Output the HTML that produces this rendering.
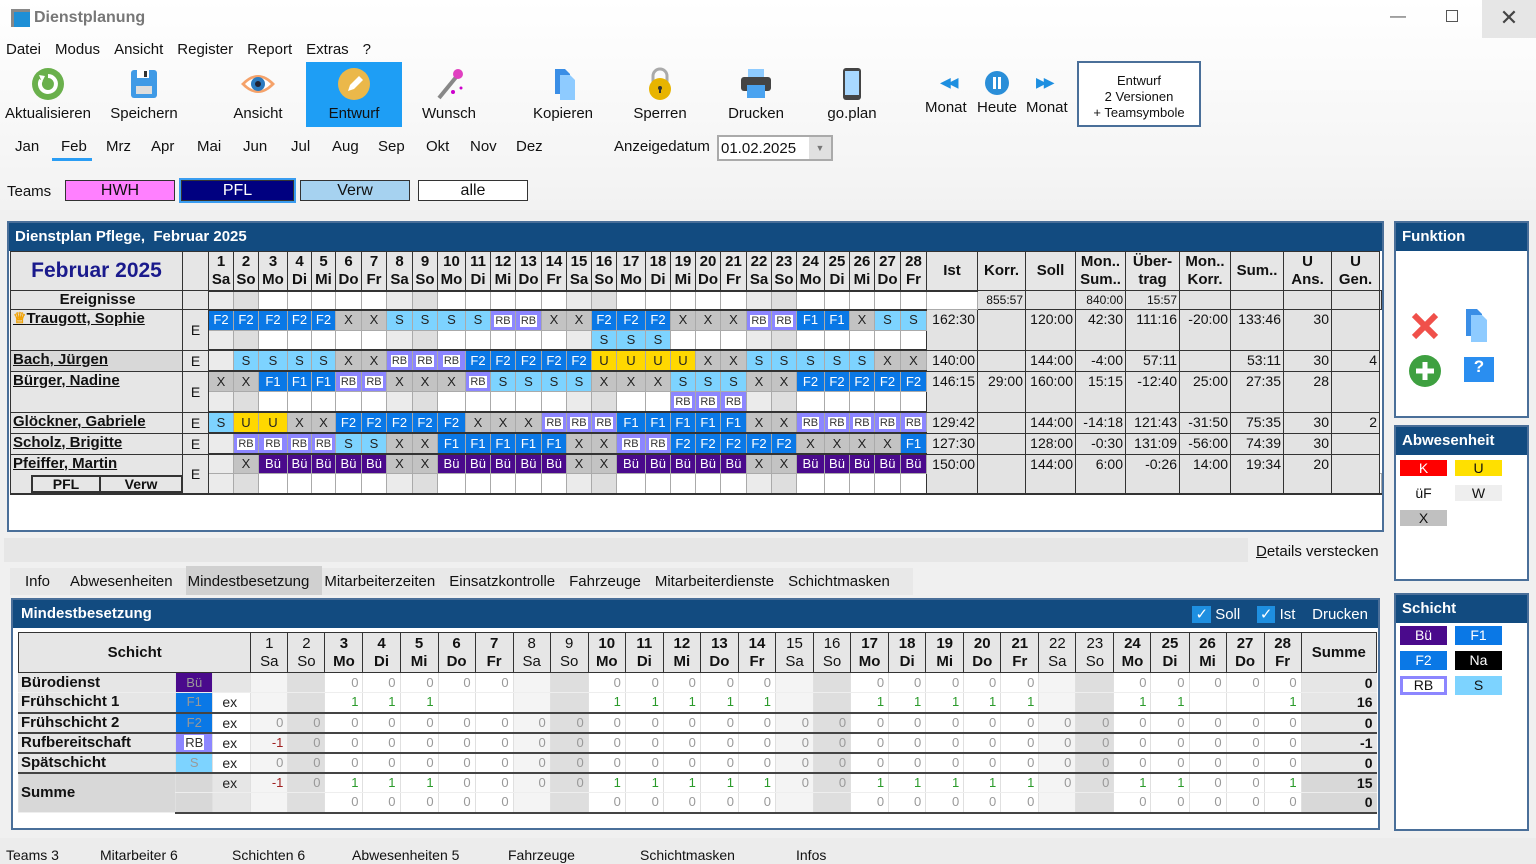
<!DOCTYPE html>
<html><head><meta charset="utf-8"><style>
*{box-sizing:border-box;margin:0;padding:0}
body{width:1536px;height:864px;overflow:hidden;background:#f0f0f0;font-family:"Liberation Sans",Arial,sans-serif;font-size:14px;color:#111;position:relative}
.abs{position:absolute}
.top{left:0;top:0;width:1536px;height:210px;background:linear-gradient(#fff,#f2f2f2)}
.menu span{margin-right:14px}
.tb{position:absolute;top:62px;height:65px;text-align:center;font-size:15px}
.tb svg{display:block;margin:4px auto 0}
.tb .l{position:absolute;left:0;right:0;top:43px}
.mon span{position:absolute;top:138px;font-size:15px}
.team{position:absolute;top:180px;height:21px;border:1px solid #333;text-align:center;font-size:16px;line-height:19px}
.panel{position:absolute;background:#fff;border:2px solid #4a6f99}
.ttl{background:#124b80;color:#fff;font-weight:bold;font-size:15px;padding:5px 6px;height:28px}
table{border-collapse:collapse;table-layout:fixed}
#g td{height:20px;border:1px solid #aaa;text-align:center;font-size:13px;padding:0;white-space:nowrap;overflow:hidden;line-height:18px}
#g tr.hd td{height:39px;font-weight:bold;font-size:15px;line-height:18px;border:1px solid #333;background:#e6e6e6}
#g .sep td{border-top:2px solid #333;height:19px}
#g td.nm{text-align:left;font-weight:bold;font-size:15px;text-decoration:underline;vertical-align:top;background:#e6e6e6;border:1px solid #333;padding-left:2px}
#g td.e{background:#e6e6e6;border:1px solid #333;font-size:14px}
#g td.v{background:#e3e3e3;border:1px solid #333;text-align:right;vertical-align:top;font-size:14px;padding-right:2px}
.f{background:#0a78e6!important;color:#fff}
.s{background:#7dd3ff!important;color:#222}
.x{background:#c3c3c3!important;color:#222}
.r{background:#8c86ff!important}
.r i,.ri{font-style:normal;background:#fff;color:#333;font-size:11px;padding:0 1px}
.b{background:#4a0a8c!important;color:#fff}
.u{background:#ffd800!important;color:#222}
.cw{background:#f4f4f4}.cs{background:#dedede}.ca{background:#ebebeb}
#m td{height:20px;border-left:1px solid #e0e0e0;text-align:right;font-size:13px;padding:0 4px 0 0;color:#999;line-height:18px;border-bottom:1px solid #eee}
#m tr.hd td{height:40px;text-align:center;color:#111;font-size:15px;font-weight:bold;border:1px solid #333;background:#e6e6e6;line-height:18px;padding:0}
#m tr.hd td.n{font-weight:normal}
#m td.nm{text-align:left;color:#111;font-weight:bold;font-size:15px;background:#e6e6e6;padding-left:2px}
#m td.c{text-align:center;padding:0}
#m td.ex{text-align:center;color:#222;background:#fff;font-size:14px}
#m td.sm{color:#111;font-weight:bold;background:#e6e6e6;font-size:14px}
#m tr.sp td{border-bottom:2px solid #444}
#m .g{color:#2a9a2a}#m .rd{color:#a02020}
.st span{position:absolute;top:847px;font-size:14px}
.leg{position:absolute;width:47px;height:16px;text-align:center;font-size:14px;line-height:16px}
</style></head><body>
<div class="abs top"></div>
<div class="abs" style="left:11px;top:9px;width:19px;height:18px;background:#1e8fd6;border-left:3px solid #888;border-top:3px solid #888"></div>
<div class="abs" style="left:34px;top:9px;font-size:16px;font-weight:bold;color:#777">Dienstplanung</div>
<div class="abs" style="left:1390px;top:8px;font-size:16px;color:#555">&#8212;</div>
<div class="abs" style="left:1446px;top:10px;width:12px;height:12px;border:1px solid #555"></div>
<div class="abs" style="left:1482px;top:0;width:54px;height:38px;background:#e6e6e6;text-align:center;font-size:22px;line-height:36px;color:#444">&#x2715;</div>
<div class="abs menu" style="left:6px;top:41px;font-size:15px"><span>Datei</span><span>Modus</span><span>Ansicht</span><span>Register</span><span>Report</span><span>Extras</span><span>?</span></div>

<div class="tb" style="left:0;width:96px"><svg width="36" height="36"><circle cx="18" cy="18" r="16" fill="#6ab04c"/><path d="M18 10a8 8 0 1 1-7 4" stroke="#fff" stroke-width="4" fill="none"/><path d="M9 9l6 1-3 6z" fill="#fff"/></svg><div class="l">Aktualisieren</div></div>
<div class="tb" style="left:100px;width:88px"><svg width="36" height="36"><rect x="5" y="4" width="26" height="28" rx="3" fill="#3f9ae6"/><rect x="11" y="4" width="12" height="8" fill="#fff"/><rect x="18" y="5" width="3" height="6" fill="#333"/><rect x="10" y="20" width="16" height="8" fill="#ddd"/></svg><div class="l">Speichern</div></div>
<div class="tb" style="left:212px;width:92px"><svg width="40" height="36"><path d="M3 18Q20 0 37 18Q20 36 3 18z" fill="#f5a26a"/><path d="M7 18Q20 5 33 18Q20 31 7 18z" fill="#fff"/><circle cx="20" cy="18" r="7" fill="#2c7bc0"/><circle cx="20" cy="18" r="3" fill="#223"/></svg><div class="l">Ansicht</div></div>
<div class="tb" style="left:306px;width:96px;background:#1e9ef5"><svg width="36" height="36"><circle cx="18" cy="18" r="16" fill="#ebb84a"/><path d="M12 25l2-6 9-9 4 4-9 9z" fill="#fff"/></svg><div class="l">Entwurf</div></div>
<div class="tb" style="left:404px;width:90px"><svg width="36" height="36"><path d="M8 32L26 10" stroke="#888" stroke-width="4"/><circle cx="27" cy="8" r="5" fill="#e040c0"/><circle cx="22" cy="26" r="2" fill="#c0c"/><circle cx="30" cy="22" r="1.5" fill="#c0c"/></svg><div class="l">Wunsch</div></div>
<div class="tb" style="left:518px;width:90px"><svg width="36" height="36"><path d="M10 3h10l5 5v20H10z" fill="#3a8ee6"/><path d="M15 9h10l5 5v20H15z" fill="#8ecbff"/></svg><div class="l">Kopieren</div></div>
<div class="tb" style="left:615px;width:90px"><svg width="36" height="36"><path d="M11 16V10a7 7 0 0 1 14 0v6" stroke="#aaa" stroke-width="3" fill="none"/><circle cx="18" cy="23" r="11" fill="#e8b400"/><circle cx="18" cy="22" r="2" fill="#333"/><rect x="17" y="22" width="2" height="5" fill="#333"/></svg><div class="l">Sperren</div></div>
<div class="tb" style="left:711px;width:90px"><svg width="36" height="36"><rect x="10" y="3" width="16" height="10" fill="#8ecbff"/><rect x="3" y="11" width="30" height="14" rx="3" fill="#444"/><rect x="9" y="19" width="18" height="13" fill="#4aa3f0"/></svg><div class="l">Drucken</div></div>
<div class="tb" style="left:807px;width:90px"><svg width="36" height="36"><rect x="9" y="2" width="18" height="32" rx="3" fill="#444"/><rect x="11" y="5" width="14" height="24" fill="#a8d8ff"/></svg><div class="l">go.plan</div></div>
<div class="abs" style="left:940px;top:74px;color:#1e8fe0;font-size:14px;letter-spacing:-3px">&#9664;&#9664;</div>
<div class="abs" style="left:985px;top:71px;width:24px;height:24px;border-radius:50%;background:#2a8ed8"><div style="position:absolute;left:8px;top:6px;width:3px;height:12px;background:#fff"></div><div style="position:absolute;left:13px;top:6px;width:3px;height:12px;background:#fff"></div></div>
<div class="abs" style="left:1036px;top:74px;color:#1e8fe0;font-size:14px;letter-spacing:-3px">&#9654;&#9654;</div>
<div class="abs" style="left:925px;top:99px;font-size:15px">Monat</div>
<div class="abs" style="left:977px;top:99px;font-size:15px">Heute</div>
<div class="abs" style="left:1026px;top:99px;font-size:15px">Monat</div>
<div class="abs" style="left:1077px;top:61px;width:124px;height:66px;border:2px solid #4a6f99;background:#fff;text-align:center;font-size:13px;line-height:16px;padding-top:10px">Entwurf<br>2 Versionen<br>+ Teamsymbole</div>

<div class="mon"><span style="left:15px">Jan</span><span style="left:61px">Feb</span><span style="left:106px">Mrz</span><span style="left:151px">Apr</span><span style="left:197px">Mai</span><span style="left:243px">Jun</span><span style="left:291px">Jul</span><span style="left:332px">Aug</span><span style="left:378px">Sep</span><span style="left:426px">Okt</span><span style="left:470px">Nov</span><span style="left:516px">Dez</span><span style="left:614px">Anzeigedatum</span></div>
<div class="abs" style="left:52px;top:158px;width:40px;height:3px;background:#2a9df4"></div>
<div class="abs" style="left:717px;top:135px;width:116px;height:26px;border:2px solid #aaa;background:#fff;font-size:15px;padding:3px 2px">01.02.2025<div style="position:absolute;right:0;top:0;width:22px;height:22px;background:#e0e0e0;color:#777;font-size:9px;text-align:center;line-height:22px">&#9660;</div></div>
<div class="abs" style="left:7px;top:183px;font-size:15px">Teams</div>
<div class="team" style="left:65px;width:110px;background:#ff80ff">HWH</div>
<div class="team" style="left:181px;width:113px;background:#000080;color:#fff;outline:2px solid #3a9df0">PFL</div>
<div class="team" style="left:300px;width:110px;background:#a6d2f0">Verw</div>
<div class="team" style="left:418px;width:110px;background:#fff">alle</div>

<div class="panel" style="left:7px;top:221px;width:1377px;height:311px">
<div class="ttl">Dienstplan Pflege,&nbsp; Februar 2025</div>
<table id="g" style="margin-left:1px;width:1372px">
<colgroup><col style="width:172px"><col style="width:26px"><col class="ca" style="width:25px"><col class="cs" style="width:25px"><col style="width:29px"><col style="width:24px"><col style="width:24px"><col style="width:26px"><col style="width:25px"><col class="ca" style="width:26px"><col class="cs" style="width:25px"><col style="width:28px"><col style="width:25px"><col style="width:25px"><col style="width:26px"><col style="width:25px"><col class="ca" style="width:25px"><col class="cs" style="width:25px"><col style="width:29px"><col style="width:25px"><col style="width:25px"><col style="width:25px"><col style="width:26px"><col class="ca" style="width:25px"><col class="cs" style="width:25px"><col style="width:28px"><col style="width:25px"><col style="width:25px"><col style="width:26px"><col style="width:26px"><col style="width:51px"><col style="width:48px"><col style="width:50px"><col style="width:50px"><col style="width:54px"><col style="width:51px"><col style="width:53px"><col style="width:48px"><col style="width:48px"></colgroup>
<tr class="hd"><td style="font-size:21px;color:#1a1a8c;background:#e6e6e6">Februar 2025<td><td>1<br>Sa<td>2<br>So<td>3<br>Mo<td>4<br>Di<td>5<br>Mi<td>6<br>Do<td>7<br>Fr<td>8<br>Sa<td>9<br>So<td>10<br>Mo<td>11<br>Di<td>12<br>Mi<td>13<br>Do<td>14<br>Fr<td>15<br>Sa<td>16<br>So<td>17<br>Mo<td>18<br>Di<td>19<br>Mi<td>20<br>Do<td>21<br>Fr<td>22<br>Sa<td>23<br>So<td>24<br>Mo<td>25<br>Di<td>26<br>Mi<td>27<br>Do<td>28<br>Fr<td>Ist<td>Korr.<td>Soll<td>Mon..<br>Sum..<td>Über-<br>trag<td>Mon..<br>Korr.<td>Sum..<td>U<br>Ans.<td>U<br>Gen.</tr>
<tr class="sep"><td class="nm" style="text-align:center;text-decoration:none">Ereignisse<td class="e"><td><td><td><td><td><td><td><td><td><td><td><td><td><td><td><td><td><td><td><td><td><td><td><td><td><td><td><td><td><td class="v" style="font-size:12px">855:57<td class="v"><td class="v" style="font-size:12px">840:00<td class="v" style="font-size:12px">15:57<td class="v"><td class="v"><td class="v"><td class="v"><td class="v"></tr>
<tr class="sep"><td class="nm" rowspan="2"><span style="color:#f0a000;text-decoration:none">&#9813;</span>Traugott, Sophie<td class="e" rowspan="2">E<td class="f">F2<td class="f">F2<td class="f">F2<td class="f">F2<td class="f">F2<td class="x">X<td class="x">X<td class="s">S<td class="s">S<td class="s">S<td class="s">S<td class="r"><i>RB</i><td class="r"><i>RB</i><td class="x">X<td class="x">X<td class="f">F2<td class="f">F2<td class="f">F2<td class="x">X<td class="x">X<td class="x">X<td class="r"><i>RB</i><td class="r"><i>RB</i><td class="f">F1<td class="f">F1<td class="x">X<td class="s">S<td class="s">S<td class="v" rowspan="2">162:30<td class="v" rowspan="2"><td class="v" rowspan="2">120:00<td class="v" rowspan="2">42:30<td class="v" rowspan="2">111:16<td class="v" rowspan="2">-20:00<td class="v" rowspan="2">133:46<td class="v" rowspan="2">30<td class="v" rowspan="2"></tr>
<tr><td><td><td><td><td><td><td><td><td><td><td><td><td><td><td><td class="s">S<td class="s">S<td class="s">S<td><td><td><td><td><td><td><td><td><td></tr>
<tr class="sep"><td class="nm" style="background:#d8d8d8">Bach, Jürgen<td class="e">E<td><td class="s">S<td class="s">S<td class="s">S<td class="s">S<td class="x">X<td class="x">X<td class="r"><i>RB</i><td class="r"><i>RB</i><td class="r"><i>RB</i><td class="f">F2<td class="f">F2<td class="f">F2<td class="f">F2<td class="f">F2<td class="u">U<td class="u">U<td class="u">U<td class="u">U<td class="x">X<td class="x">X<td class="s">S<td class="s">S<td class="s">S<td class="s">S<td class="s">S<td class="x">X<td class="x">X<td class="v">140:00<td class="v"><td class="v">144:00<td class="v">-4:00<td class="v">57:11<td class="v"><td class="v">53:11<td class="v">30<td class="v">4</tr>
<tr class="sep"><td class="nm" rowspan="2">Bürger, Nadine<td class="e" rowspan="2">E<td class="x">X<td class="x">X<td class="f">F1<td class="f">F1<td class="f">F1<td class="r"><i>RB</i><td class="r"><i>RB</i><td class="x">X<td class="x">X<td class="x">X<td class="r"><i>RB</i><td class="s">S<td class="s">S<td class="s">S<td class="s">S<td class="x">X<td class="x">X<td class="x">X<td class="s">S<td class="s">S<td class="s">S<td class="x">X<td class="x">X<td class="f">F2<td class="f">F2<td class="f">F2<td class="f">F2<td class="f">F2<td class="v" rowspan="2">146:15<td class="v" rowspan="2">29:00<td class="v" rowspan="2">160:00<td class="v" rowspan="2">15:15<td class="v" rowspan="2">-12:40<td class="v" rowspan="2">25:00<td class="v" rowspan="2">27:35<td class="v" rowspan="2">28<td class="v" rowspan="2"></tr>
<tr><td><td><td><td><td><td><td><td><td><td><td><td><td><td><td><td><td><td><td class="r"><i>RB</i><td class="r"><i>RB</i><td class="r"><i>RB</i><td><td><td><td><td><td><td></tr>
<tr class="sep"><td class="nm">Glöckner, Gabriele<td class="e">E<td class="s">S<td class="u">U<td class="u">U<td class="x">X<td class="x">X<td class="f">F2<td class="f">F2<td class="f">F2<td class="f">F2<td class="f">F2<td class="x">X<td class="x">X<td class="x">X<td class="r"><i>RB</i><td class="r"><i>RB</i><td class="r"><i>RB</i><td class="f">F1<td class="f">F1<td class="f">F1<td class="f">F1<td class="f">F1<td class="x">X<td class="x">X<td class="r"><i>RB</i><td class="r"><i>RB</i><td class="r"><i>RB</i><td class="r"><i>RB</i><td class="r"><i>RB</i><td class="v">129:42<td class="v"><td class="v">144:00<td class="v">-14:18<td class="v">121:43<td class="v">-31:50<td class="v">75:35<td class="v">30<td class="v">2</tr>
<tr class="sep"><td class="nm">Scholz, Brigitte<td class="e">E<td><td class="r"><i>RB</i><td class="r"><i>RB</i><td class="r"><i>RB</i><td class="r"><i>RB</i><td class="s">S<td class="s">S<td class="x">X<td class="x">X<td class="f">F1<td class="f">F1<td class="f">F1<td class="f">F1<td class="f">F1<td class="x">X<td class="x">X<td class="r"><i>RB</i><td class="r"><i>RB</i><td class="f">F2<td class="f">F2<td class="f">F2<td class="f">F2<td class="f">F2<td class="x">X<td class="x">X<td class="x">X<td class="x">X<td class="f">F1<td class="v">127:30<td class="v"><td class="v">128:00<td class="v">-0:30<td class="v">131:09<td class="v">-56:00<td class="v">74:39<td class="v">30<td class="v"></tr>
<tr class="sep"><td class="nm" rowspan="2" style="text-decoration:none"><u>Pfeiffer, Martin</u><div style="margin:2px 0 0 18px;display:flex;width:152px;height:18px;border:2px solid #333;font-size:14px;line-height:14px"><span style="width:68px;text-align:center;border-right:2px solid #333">PFL</span><span style="flex:1;text-align:center">Verw</span></div><td class="e" rowspan="2">E<td><td class="x">X<td class="b">Bü<td class="b">Bü<td class="b">Bü<td class="b">Bü<td class="b">Bü<td class="x">X<td class="x">X<td class="b">Bü<td class="b">Bü<td class="b">Bü<td class="b">Bü<td class="b">Bü<td class="x">X<td class="x">X<td class="b">Bü<td class="b">Bü<td class="b">Bü<td class="b">Bü<td class="b">Bü<td class="x">X<td class="x">X<td class="b">Bü<td class="b">Bü<td class="b">Bü<td class="b">Bü<td class="b">Bü<td class="v" rowspan="2">150:00<td class="v" rowspan="2"><td class="v" rowspan="2">144:00<td class="v" rowspan="2">6:00<td class="v" rowspan="2">-0:26<td class="v" rowspan="2">14:00<td class="v" rowspan="2">19:34<td class="v" rowspan="2">20<td class="v" rowspan="2"></tr>
<tr style="border-bottom:2px solid #333"><td><td><td><td><td><td><td><td><td><td><td><td><td><td><td><td><td><td><td><td><td><td><td><td><td><td><td><td><td></tr>
</table></div>

<div class="abs" style="left:4px;top:538px;width:1244px;height:24px;background:#e6e6e6"></div>
<div class="abs" style="left:1256px;top:543px;font-size:15px"><u>D</u>etails verstecken</div>
<div class="abs" style="left:10px;top:568px;width:903px;height:27px;background:#e8e8e8"></div>
<div class="abs" style="left:186px;top:566px;width:136px;height:29px;background:#d0d0d0"></div>
<div class="abs" style="left:25px;top:573px;font-size:15px;word-spacing:0"><span style="margin-right:20px">Info</span><span style="margin-right:15px">Abwesenheiten</span><span style="margin-right:15px">Mindestbesetzung</span><span style="margin-right:14px">Mitarbeiterzeiten</span><span style="margin-right:14px">Einsatzkontrolle</span><span style="margin-right:14px">Fahrzeuge</span><span style="margin-right:14px">Mitarbeiterdienste</span><span>Schichtmasken</span></div>

<div class="panel" style="left:11px;top:598px;width:1369px;height:232px">
<div class="ttl" style="padding-left:8px">Mindestbesetzung<span style="position:absolute;right:10px;top:5px;font-weight:normal"><span style="background:#1e8fe0;padding:0 3px">&#10003;</span> Soll &nbsp;&nbsp; <span style="background:#1e8fe0;padding:0 3px">&#10003;</span> Ist &nbsp;&nbsp; Drucken</span></div>
<table id="m" style="margin:4px 0 0 5px;width:1359px">
<colgroup><col style="width:157px"><col style="width:37px"><col style="width:38px"><col class="cw" style="width:37px"><col class="cs" style="width:37px"><col style="width:38px"><col style="width:37px"><col style="width:38px"><col style="width:37px"><col style="width:38px"><col class="cw" style="width:37px"><col class="cs" style="width:38px"><col style="width:37px"><col style="width:38px"><col style="width:37px"><col style="width:38px"><col style="width:37px"><col class="cw" style="width:38px"><col class="cs" style="width:37px"><col style="width:38px"><col style="width:37px"><col style="width:38px"><col style="width:37px"><col style="width:38px"><col class="cw" style="width:37px"><col class="cs" style="width:38px"><col style="width:37px"><col style="width:38px"><col style="width:37px"><col style="width:38px"><col style="width:37px"><col style="width:75px"></colgroup>
<tr class="hd"><td colspan="3">Schicht<td class="n">1<br>Sa<td class="n">2<br>So<td>3<br>Mo<td>4<br>Di<td>5<br>Mi<td>6<br>Do<td>7<br>Fr<td class="n">8<br>Sa<td class="n">9<br>So<td>10<br>Mo<td>11<br>Di<td>12<br>Mi<td>13<br>Do<td>14<br>Fr<td class="n">15<br>Sa<td class="n">16<br>So<td>17<br>Mo<td>18<br>Di<td>19<br>Mi<td>20<br>Do<td>21<br>Fr<td class="n">22<br>Sa<td class="n">23<br>So<td>24<br>Mo<td>25<br>Di<td>26<br>Mi<td>27<br>Do<td>28<br>Fr<td>Summe</tr>
<tr><td class="nm">Bürodienst<td class="c b">Bü<td class="ex" style="background:#e6e6e6"><td><td><td>0<td>0<td>0<td>0<td>0<td><td><td>0<td>0<td>0<td>0<td>0<td><td><td>0<td>0<td>0<td>0<td>0<td><td><td>0<td>0<td>0<td>0<td>0<td class="sm">0</tr>
<tr class="sp"><td class="nm">Frühschicht 1<td class="c f">F1<td class="ex">ex<td><td><td class="g">1<td class="g">1<td class="g">1<td><td><td><td><td class="g">1<td class="g">1<td class="g">1<td class="g">1<td class="g">1<td><td><td class="g">1<td class="g">1<td class="g">1<td class="g">1<td class="g">1<td><td><td class="g">1<td class="g">1<td><td><td class="g">1<td class="sm">16</tr>
<tr class="sp"><td class="nm">Frühschicht 2<td class="c f">F2<td class="ex">ex<td>0<td>0<td>0<td>0<td>0<td>0<td>0<td>0<td>0<td>0<td>0<td>0<td>0<td>0<td>0<td>0<td>0<td>0<td>0<td>0<td>0<td>0<td>0<td>0<td>0<td>0<td>0<td>0<td class="sm">0</tr>
<tr class="sp"><td class="nm">Rufbereitschaft<td class="c r"><span class="ri" style="font-size:13px">RB</span><td class="ex">ex<td class="rd">-1<td>0<td>0<td>0<td>0<td>0<td>0<td>0<td>0<td>0<td>0<td>0<td>0<td>0<td>0<td>0<td>0<td>0<td>0<td>0<td>0<td>0<td>0<td>0<td>0<td>0<td>0<td>0<td class="sm">-1</tr>
<tr class="sp"><td class="nm">Spätschicht<td class="c s">S<td class="ex">ex<td>0<td>0<td>0<td>0<td>0<td>0<td>0<td>0<td>0<td>0<td>0<td>0<td>0<td>0<td>0<td>0<td>0<td>0<td>0<td>0<td>0<td>0<td>0<td>0<td>0<td>0<td>0<td>0<td class="sm">0</tr>
<tr><td class="nm" rowspan="2" style="background:#d8d8d8">Summe<td style="background:#d8d8d8"><td class="ex" style="background:#e6e6e6">ex<td class="rd">-1<td>0<td class="g">1<td class="g">1<td class="g">1<td>0<td>0<td>0<td>0<td class="g">1<td class="g">1<td class="g">1<td class="g">1<td class="g">1<td>0<td>0<td class="g">1<td class="g">1<td class="g">1<td class="g">1<td class="g">1<td>0<td>0<td class="g">1<td class="g">1<td>0<td>0<td class="g">1<td class="sm" style="background:#d8d8d8">15</tr>
<tr class="sp"><td style="background:#d8d8d8"><td style="background:#e6e6e6"><td><td><td>0<td>0<td>0<td>0<td>0<td><td><td>0<td>0<td>0<td>0<td>0<td><td><td>0<td>0<td>0<td>0<td>0<td><td><td>0<td>0<td>0<td>0<td>0<td class="sm" style="background:#d8d8d8">0</tr>
</table></div>

<div class="panel" style="left:1394px;top:221px;width:135px;height:197px"><div class="ttl">Funktion</div>
<svg class="abs" style="left:12px;top:86px" width="36" height="36"><path d="M6 6L28 28M28 6L6 28" stroke="#f0504a" stroke-width="6"/></svg>
<svg class="abs" style="left:66px;top:84px" width="36" height="36"><path d="M4 2h11l5 5v22H4z" fill="#3a8ee6"/><path d="M9 8h11l5 5v22H9z" fill="#8ecbff"/></svg>
<svg class="abs" style="left:12px;top:131px" width="36" height="36"><circle cx="17" cy="17" r="16" fill="#3ea040"/><path d="M17 8v18M8 17h18" stroke="#fff" stroke-width="5"/></svg>
<div class="abs" style="left:68px;top:134px;width:30px;height:25px;background:#2a8ef0;color:#fff;font-weight:bold;text-align:center;font-size:17px">?</div>
</div>
<div class="panel" style="left:1394px;top:425px;width:135px;height:156px"><div class="ttl">Abwesenheit</div>
<div class="leg" style="left:4px;top:33px;background:#f00;color:#fff">K</div>
<div class="leg" style="left:59px;top:33px;background:#ffe000">U</div>
<div class="leg" style="left:4px;top:58px">üF</div>
<div class="leg" style="left:59px;top:58px;background:#eee">W</div>
<div class="leg" style="left:4px;top:83px;background:#c0c0c0">X</div>
</div>
<div class="panel" style="left:1394px;top:593px;width:135px;height:238px"><div class="ttl">Schicht</div>
<div class="leg" style="left:4px;top:31px;background:#4a0a8c;color:#fff;height:19px;line-height:19px">Bü</div>
<div class="leg" style="left:59px;top:31px;background:#0a78e6;color:#fff;height:19px;line-height:19px">F1</div>
<div class="leg" style="left:4px;top:56px;background:#0a78e6;color:#fff;height:19px;line-height:19px">F2</div>
<div class="leg" style="left:59px;top:56px;background:#000;color:#fff;height:19px;line-height:19px">Na</div>
<div class="leg" style="left:4px;top:81px;background:#fff;border:3px solid #8c86ff;height:19px;line-height:13px">RB</div>
<div class="leg" style="left:59px;top:81px;background:#7dd3ff;height:19px;line-height:19px">S</div>
</div>

<div class="abs" style="left:0;top:838px;width:1536px;height:26px;background:#ececec"></div>
<div class="st"><span style="left:6px">Teams 3</span><span style="left:100px">Mitarbeiter 6</span><span style="left:232px">Schichten 6</span><span style="left:352px">Abwesenheiten 5</span><span style="left:508px">Fahrzeuge</span><span style="left:640px">Schichtmasken</span><span style="left:796px">Infos</span></div>
</body></html>
